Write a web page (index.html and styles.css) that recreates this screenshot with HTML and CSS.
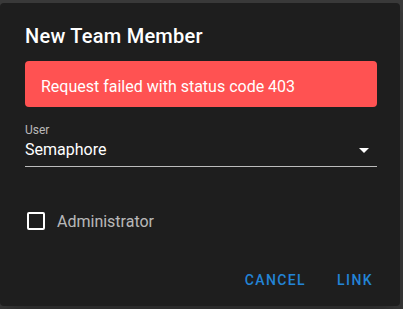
FILE: index.html
```html
<!DOCTYPE html>
<html lang="en">
<head>
    <meta charset="UTF-8">
    <meta name="viewport" content="width=device-width, initial-scale=1.0">
    <title>New Team Member</title>
    <link rel="stylesheet" href="styles.css">
</head>
<body>

<div class="dialog">
    <div class="dialog-title">New Team Member</div>

    <div class="dialog-text">
        <div class="alert">Request failed with status code 403</div>

        <div class="select">
            <div class="select-label">User</div>
            <div class="select-row">
                <span class="select-value">Semaphore</span>
                <svg class="select-arrow" width="24" height="24" viewBox="0 0 24 24">
                    <path d="M7 10l5 5 5-5z" fill="#fff"/>
                </svg>
            </div>
        </div>

        <label class="checkbox">
            <span class="checkbox-box"></span>
            <span class="checkbox-label">Administrator</span>
        </label>
    </div>

    <div class="dialog-actions">
        <button class="text-btn">Cancel</button>
        <button class="text-btn">Link</button>
    </div>
</div>

</body>
</html>
```

FILE: styles.css
```css
* {
  box-sizing: border-box;
}
html {
  font-family: Roboto, "Liberation Sans", sans-serif;
  background-color: #3a3a3a;
  color: #fff;
}
body {
  margin: 0;
  height: 309px;
  overflow: hidden;
}
.dialog {
  display: flex;
  flex-direction: column;
  width: 400px;
  height: 303px;
  margin-top: 3px;
  background-color: #1e1e1e;
  border-radius: 4px;
  box-shadow: 0 11px 15px -7px rgba(0, 0, 0, .2), 0 24px 38px 3px rgba(0, 0, 0, .14);
}
.dialog-title {
  padding: 17px 24px 9px 25px;
  font-size: 20px;
  font-weight: 500;
  line-height: 32px;
  letter-spacing: .0125em;
}
.dialog-text {
  padding: 0 23px 0 25px;
}
.alert {
  height: 46px;
  padding: 14px 16px 8px;
  margin-bottom: 16px;
  background-color: #ff5252;
  border-radius: 4px;
  font-size: 16px;
  line-height: 24px;
}
.select-label {
  font-size: 12px;
  line-height: 15px;
  color: rgba(255, 255, 255, .7);
}
.select-row {
  display: flex;
  align-items: center;
  height: 29px;
  padding-bottom: 5px;
  border-bottom: 1px solid rgba(255, 255, 255, .7);
}
.select-value {
  flex: 1;
  font-size: 16px;
  line-height: 24px;
}
.select-arrow {
  margin-right: 1px;
}
.checkbox {
  display: flex;
  align-items: center;
  height: 24px;
  margin-top: 42px;
  margin-left: 2px;
}
.checkbox-box {
  width: 18px;
  height: 18px;
  border: 2px solid #fff;
  border-radius: 2px;
}
.checkbox-label {
  margin-left: 12px;
  font-size: 16px;
  color: rgba(255, 255, 255, .7);
}
.dialog-actions {
  display: flex;
  justify-content: flex-end;
  margin-top: auto;
  padding: 0 12px 8px 8px;
}
.text-btn {
  height: 36px;
  min-width: 64px;
  padding: 0 15px 0 16px;
  background: none;
  border: none;
  font-family: inherit;
  font-size: 14px;
  font-weight: 500;
  letter-spacing: 1.4px;
  text-transform: uppercase;
  color: #2384d6;
}
```
